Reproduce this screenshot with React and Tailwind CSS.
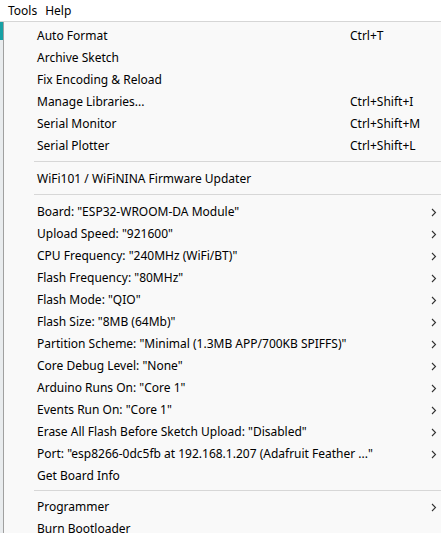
import React from 'react';

const items = [
  { label: 'Auto Format', key: 'Ctrl+T' },
  { label: 'Archive Sketch' },
  { label: 'Fix Encoding & Reload' },
  { label: 'Manage Libraries...', key: 'Ctrl+Shift+I' },
  { label: 'Serial Monitor', key: 'Ctrl+Shift+M' },
  { label: 'Serial Plotter', key: 'Ctrl+Shift+L' },
  { sep: true },
  { label: 'WiFi101 / WiFiNINA Firmware Updater' },
  { sep: true },
  { label: 'Board: "ESP32-WROOM-DA Module"', sub: true },
  { label: 'Upload Speed: "921600"', sub: true },
  { label: 'CPU Frequency: "240MHz (WiFi/BT)"', sub: true },
  { label: 'Flash Frequency: "80MHz"', sub: true },
  { label: 'Flash Mode: "QIO"', sub: true },
  { label: 'Flash Size: "8MB (64Mb)"', sub: true },
  { label: 'Partition Scheme: "Minimal (1.3MB APP/700KB SPIFFS)"', sub: true },
  { label: 'Core Debug Level: "None"', sub: true },
  { label: 'Arduino Runs On: "Core 1"', sub: true },
  { label: 'Events Run On: "Core 1"', sub: true },
  { label: 'Erase All Flash Before Sketch Upload: "Disabled"', sub: true },
  { label: 'Port: "esp8266-0dc5fb at 192.168.1.207 (Adafruit Feather ..."', sub: true },
  { label: 'Get Board Info' },
  { sep: true, tight: true },
  { label: 'Programmer', sub: true },
  { label: 'Burn Bootloader' },
];

const Chevron = () => (
  <svg width="6" height="9" viewBox="0 0 6 9" className="text-[#333]">
    <path d="M1 1 L4.5 4.5 L1 8" fill="none" stroke="currentColor" strokeWidth="1.1" />
  </svg>
);

export default function App() {
  return (
    <div className="w-[441px] h-[533px] overflow-hidden bg-white text-[12px] text-black font-['Noto_Sans','Liberation_Sans',sans-serif] flex flex-col">
      {/* Menu bar */}
      <div className="h-[22px] flex items-center border-b border-[#d6d6d6] bg-white shrink-0">
        <span className="pl-[8px] pr-[8px]">Tools</span>
        <span>Help</span>
      </div>

      <div className="flex flex-1 min-h-0">
        {/* window behind the menu */}
        <div className="w-[3px] flex flex-col shrink-0">
          <div className="h-[18px] bg-[#17a1a5]" />
          <div className="flex-1 bg-[#e9ecee]" />
        </div>

        {/* Dropdown */}
        <div className="flex-1 bg-[#f9f9f9] border-l border-[#a0a0a0] pt-[3px] flex flex-col">
          {items.map((it, i) =>
            it.sep ? (
              <div
                key={i}
                className={`${it.tight ? 'h-[9px] pt-[3px]' : 'h-[11px] pt-[4px]'} pl-[30px] shrink-0`}
              >
                <div className="h-px bg-[#d7d7d7]" />
              </div>
            ) : (
              <div key={i} className="h-[22px] flex items-center shrink-0 whitespace-nowrap">
                <span className="pl-[33px] flex-1">{it.label}</span>
                {it.key && <span className="w-[91px]">{it.key}</span>}
                {it.sub && (
                  <span className="w-[10px] flex items-center">
                    <Chevron />
                  </span>
                )}
              </div>
            )
          )}
        </div>
      </div>
    </div>
  );
}
